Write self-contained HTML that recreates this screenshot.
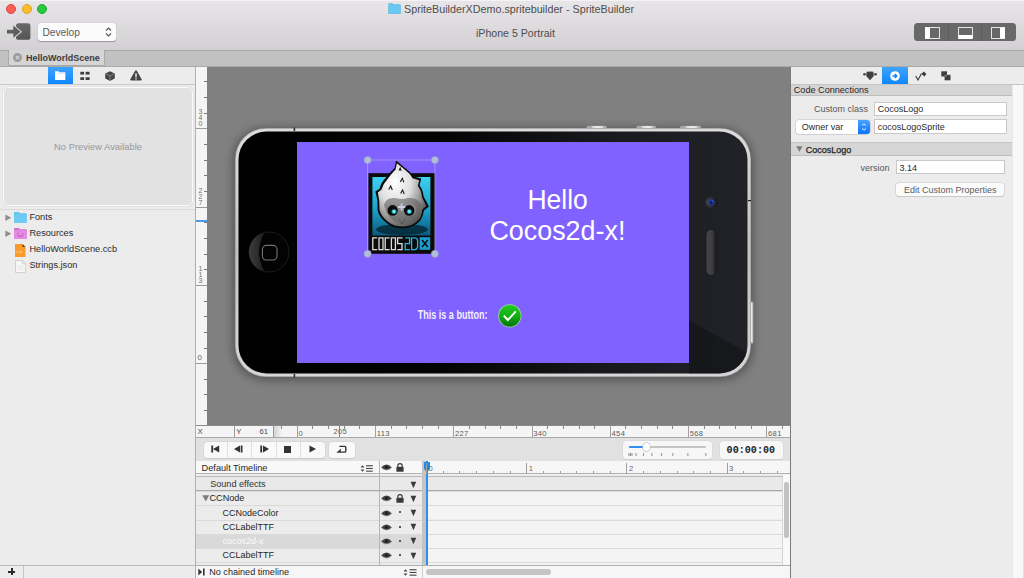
<!DOCTYPE html>
<html><head><meta charset="utf-8">
<style>
*{box-sizing:border-box;margin:0;padding:0}
html,body{width:1024px;height:578px;overflow:hidden;background:#ececec;font-family:"Liberation Sans",sans-serif;color:#333;position:relative}
.a{position:absolute}
.t{position:absolute;white-space:pre;line-height:1}
#title{left:0;top:0;width:1024px;height:51px;background:linear-gradient(#e8e6e8,#d2d0d2);border-bottom:1px solid #a6a6a6}
.tl{position:absolute;top:4px;width:10px;height:10px;border-radius:50%}
#tabbar{left:0;top:51px;width:1024px;height:16px;background:#c1c1c1;border-bottom:1px solid #a9a9a9}
#left{left:0;top:67px;width:195px;height:511px;background:#ececec}
#vrul{left:196px;top:67px;width:11px;height:359px;background:#f5f5f5}
#lborder{left:195px;top:67px;width:1px;height:511px;background:#b0b0b0}
#canvas{left:207px;top:67px;width:584px;height:359px;background:#808080;overflow:hidden}
#right{left:791px;top:67px;width:233px;height:511px;background:#ececec}
#rborder{left:790px;top:67px;width:1px;height:511px;background:#7a7a7a}
#hrul{left:196px;top:426px;width:594px;height:11px;background:#f5f5f5;overflow:hidden}
#hrb{left:196px;top:437px;width:594px;height:1px;background:#a8a8a8}
#hrt{left:196px;top:425px;width:594px;height:1px;background:#8a8a8a}
#tctl{left:196px;top:438px;width:594px;height:23px;background:#e1e1e1}
#tlw{left:196px;top:461px;width:594px;height:117px;background:#ececec;overflow:hidden}
</style></head><body>
<!-- TITLE BAR -->
<div id="title" class="a">
  <div class="a" style="left:0;top:0;width:1024px;height:1px;background:#f3f1f3"></div>
  <div class="tl" style="left:6px;background:#fc5f57;border:0.5px solid #e0443e"></div>
  <div class="tl" style="left:21.5px;background:#fdbc2e;border:0.5px solid #dea123"></div>
  <div class="tl" style="left:37px;background:#28c840;border:0.5px solid #1aab29"></div>
  <svg class="a" style="left:7px;top:23px" width="24" height="18" viewBox="0 0 24 18">
    <defs><linearGradient id="exg" x1="0" y1="0" x2="0" y2="1"><stop offset="0" stop-color="#6a6a6a"/><stop offset="1" stop-color="#545454"/></linearGradient></defs>
    <rect x="9" y="0.2" width="14.4" height="16.6" rx="2.6" fill="url(#exg)"/>
    <path d="M5.8 0.9 L15.2 8.65 L5.8 16.4 Z" fill="#d9d7d9"/>
    <path d="M6.3 2.6 L13.6 8.65 L6.3 14.7 Z" fill="#5e5e5e"/>
    <rect x="0" y="6.8" width="7" height="3.7" fill="#5e5e5e"/>
  </svg>
  <div class="a" style="left:37.5px;top:23px;width:78px;height:18px;background:#fbfbfb;border-radius:3px;box-shadow:0 0.5px 1px rgba(0,0,0,.3)"></div>
  <div class="t" style="left:42.5px;top:27.8px;font-size:10.2px;color:#5a5a5a">Develop</div>
  <svg class="a" style="left:105px;top:26px" width="7" height="12" viewBox="0 0 7 12"><path d="M1 4.5 L3.5 2 L6 4.5 M1 7.5 L3.5 10 L6 7.5" fill="none" stroke="#555" stroke-width="1.1"/></svg>
  <svg class="a" style="left:388px;top:3px" width="13" height="11" viewBox="0 0 13 11"><path d="M0.5 1.2 Q0.5 0.5 1.2 0.5 H4.5 L5.5 1.6 H11.8 Q12.5 1.6 12.5 2.3 V10 Q12.5 10.7 11.8 10.7 H1.2 Q0.5 10.7 0.5 10 Z" fill="#6cc6f2" stroke="#59b1e0" stroke-width="0.6"/></svg>
  <div class="t" style="left:404px;top:3.6px;font-size:10.75px;color:#4d4d4d">SpriteBuilderXDemo.spritebuilder - SpriteBuilder</div>
  <div class="t" style="left:476px;top:28.2px;font-size:10.6px;color:#4d4d4d">iPhone 5 Portrait</div>
  <div class="a" style="left:914px;top:23px;width:102px;height:18px;background:#686868;border-radius:3.5px"></div>
  <div class="a" style="left:948px;top:23px;width:1px;height:18px;background:#5c5c5c"></div>
  <div class="a" style="left:981px;top:23px;width:1px;height:18px;background:#5c5c5c"></div>
  <div class="a" style="left:925px;top:26.5px;width:15px;height:12px;border:1px solid #e6e6e6;border-radius:1px;border-left:5px solid #fff"></div>
  <div class="a" style="left:958px;top:26.5px;width:15px;height:12px;border:1px solid #e6e6e6;border-radius:1px;border-bottom:4px solid #fff"></div>
  <div class="a" style="left:991px;top:26.5px;width:14px;height:12px;border:1px solid #e6e6e6;border-radius:1px;border-right:5px solid #fff"></div>
</div>
<!-- TAB BAR -->
<div id="tabbar" class="a">
  <div class="a" style="left:8.4px;top:-1px;width:96.6px;height:16px;background:#d5d5d5;border:1px solid #a9a9a9;border-top:none;border-radius:0 0 2px 2px"></div>
  <div class="a" style="left:12.5px;top:2px;width:9px;height:9px;border-radius:50%;background:#9d9d9d"></div>
  <svg class="a" style="left:12.5px;top:2px" width="9" height="9" viewBox="0 0 9 9"><path d="M2.8 2.8 L6.2 6.2 M6.2 2.8 L2.8 6.2" stroke="#d6d6d6" stroke-width="1.1"/></svg>
  <div class="t" style="left:26px;top:3px;font-size:9px;font-weight:700;color:#3c3c3c">HelloWorldScene</div>
</div>
<!-- LEFT PANEL -->
<div id="left" class="a">
  <div class="a" style="left:0;top:0;width:195px;height:18px;border-bottom:1px solid #c9c9c9"></div>
  <div class="a" style="left:48px;top:0;width:25px;height:17px;background:linear-gradient(#3ea3ff,#0f87fb)"></div>
  <svg class="a" style="left:55px;top:4px" width="11" height="9" viewBox="0 0 11 9"><path d="M0 0.3 H4 V1.3 H10.3 V9 H0 Z" fill="#fff"/><rect x="0" y="2" width="10.3" height="0.7" fill="#cfe6ff"/></svg>
  <svg class="a" style="left:80px;top:4px" width="10" height="9" viewBox="0 0 10 9"><rect x="0.3" y="0.8" width="3.8" height="2.8" fill="#3f3f3f"/><rect x="5.6" y="0.8" width="4" height="2.8" fill="#3f3f3f"/><rect x="0.3" y="6.2" width="3.8" height="2.9" fill="#3f3f3f"/><rect x="5.6" y="6.2" width="4" height="2.9" fill="#3f3f3f"/></svg>
  <svg class="a" style="left:105px;top:3.5px" width="10" height="10" viewBox="0 0 10 10"><path d="M5 0.2 Q5.4 0.2 9.3 2.2 Q9.8 2.5 9.8 3 V7 Q9.8 7.5 9.3 7.8 L5.4 9.7 Q5 9.9 4.6 9.7 L0.7 7.8 Q0.2 7.5 0.2 7 V3 Q0.2 2.5 0.7 2.2 Q4.6 0.2 5 0.2 Z" fill="#474747"/><path d="M1 2.9 L5 4.9 L9 2.9 M5 4.9 V9.3" stroke="#a8a8a8" stroke-width="0.6" fill="none"/></svg>
  <svg class="a" style="left:129.5px;top:3px" width="12" height="11" viewBox="0 0 12 11"><path d="M6 0.3 Q6.6 0.3 7 1 L11.6 9.3 Q12 10.5 10.8 10.5 H1.2 Q0 10.5 0.4 9.3 L5 1 Q5.4 0.3 6 0.3 Z" fill="#444"/><rect x="5.35" y="3.3" width="1.3" height="4" fill="#fff"/><rect x="5.35" y="8.1" width="1.3" height="1.3" fill="#fff"/></svg>
  <div class="a" style="left:2.5px;top:20px;width:190px;height:118.5px;background:#e2e2e2;border:1.5px solid #fbfbfb;border-radius:5px;box-shadow:0 0 0 0.5px #d9d9d9"></div>
  <div class="t" style="left:0;width:195px;text-align:center;top:74.9px;font-size:9.4px;color:#989898;padding-left:1px">No Preview Available</div>
  <div class="a" style="left:0;top:142px;width:195px;height:1px;background:#d9d9d9"></div>
  <svg class="a" style="left:5px;top:147px" width="7" height="8" viewBox="0 0 7 8"><path d="M0.3 0.6 L6.3 3.8 L0.3 7 Z" fill="#8d8d8d"/></svg>
  <svg class="a" style="left:5px;top:163px" width="7" height="8" viewBox="0 0 7 8"><path d="M0.3 0.6 L6.3 3.8 L0.3 7 Z" fill="#8d8d8d"/></svg>
  <svg class="a" style="left:14px;top:145px" width="13" height="11" viewBox="0 0 13 11"><path d="M0 1 Q0 0 1 0 H5 L5.8 1.2 H12 Q12.7 1.2 12.7 2 V10.3 Q12.7 11 12 11 H0.7 Q0 11 0 10.3 Z" fill="#62c2f0"/><rect x="0" y="2.2" width="12.7" height="8.8" rx="0.7" fill="#6ccaf4"/></svg>
  <svg class="a" style="left:14px;top:161px" width="13" height="11" viewBox="0 0 13 11"><path d="M0 1 Q0 0 1 0 H5 L5.8 1.2 H12 Q12.7 1.2 12.7 2 V10.3 Q12.7 11 12 11 H0.7 Q0 11 0 10.3 Z" fill="#d56fd2"/><rect x="0" y="2.2" width="12.7" height="8.8" rx="0.7" fill="#e58ae0"/><path d="M3.8 5.2 v0.8 M8.9 5.2 v0.8 M3.3 7.3 Q6.35 9.6 9.4 7.3" stroke="#a33ea0" stroke-width="0.7" fill="none"/></svg>
  <svg class="a" style="left:15px;top:176.5px" width="11" height="13" viewBox="0 0 11 13"><path d="M0 0 H7.5 L10.5 3 V13 H0 Z" fill="#fb9a2c"/><path d="M7.5 0 V3 H10.5 Z" fill="#3d2a10" opacity=".8"/><text x="0.6" y="8.6" font-size="4.3" font-family="Liberation Sans" fill="#ffd9a8">ccb</text></svg>
  <svg class="a" style="left:15px;top:192.5px" width="11" height="13" viewBox="0 0 11 13"><path d="M0.5 0.5 H7.3 L10.5 3.7 V12.5 H0.5 Z" fill="#f7f7f7" stroke="#c8c8c8" stroke-width="0.8"/><path d="M7.3 0.5 V3.7 H10.5" fill="none" stroke="#c8c8c8" stroke-width="0.8"/><path d="M2 6 H8.5 M2 7.7 H8.5 M2 9.4 H8.5" stroke="#dedede" stroke-width="0.6"/></svg>
  <div class="t" style="left:29.4px;top:145.5px;font-size:9.2px;color:#2b2b2b">Fonts</div>
  <div class="t" style="left:29.4px;top:161.5px;font-size:9.2px;color:#2b2b2b">Resources</div>
  <div class="t" style="left:29.4px;top:177.5px;font-size:9.2px;color:#2b2b2b">HelloWorldScene.ccb</div>
  <div class="t" style="left:29.4px;top:193.5px;font-size:9.2px;color:#2b2b2b">Strings.json</div>
  <div class="a" style="left:0;top:498px;width:195px;height:13px;border-top:1px solid #bdbdbd;background:#ececec"></div>
  <div class="a" style="left:23px;top:499px;width:1px;height:12px;background:#c4c4c4"></div>
  <div class="a" style="left:8.2px;top:503.6px;width:7px;height:2px;background:#2a2a2a"></div>
  <div class="a" style="left:10.7px;top:501.1px;width:2px;height:7px;background:#2a2a2a"></div>
</div>
<!-- VERTICAL RULER -->
<div id="lborder" class="a"></div>
<div id="vrul" class="a"><div class="a" style="left:8px;top:14.2px;width:3px;height:1px;background:#7a7a7a"></div><div class="a" style="left:8px;top:29.9px;width:3px;height:1px;background:#7a7a7a"></div><div class="a" style="left:8px;top:45.5px;width:3px;height:1px;background:#7a7a7a"></div><div class="a" style="left:0;top:61.2px;width:11px;height:1px;background:#9a9a9a"></div><div class="a" style="left:8px;top:76.8px;width:3px;height:1px;background:#7a7a7a"></div><div class="a" style="left:8px;top:92.5px;width:3px;height:1px;background:#7a7a7a"></div><div class="a" style="left:8px;top:108.2px;width:3px;height:1px;background:#7a7a7a"></div><div class="a" style="left:8px;top:123.8px;width:3px;height:1px;background:#7a7a7a"></div><div class="a" style="left:0;top:139.5px;width:11px;height:1px;background:#9a9a9a"></div><div class="a" style="left:8px;top:155.2px;width:3px;height:1px;background:#7a7a7a"></div><div class="a" style="left:8px;top:170.8px;width:3px;height:1px;background:#7a7a7a"></div><div class="a" style="left:8px;top:186.5px;width:3px;height:1px;background:#7a7a7a"></div><div class="a" style="left:8px;top:202.1px;width:3px;height:1px;background:#7a7a7a"></div><div class="a" style="left:0;top:217.8px;width:11px;height:1px;background:#9a9a9a"></div><div class="a" style="left:8px;top:233.5px;width:3px;height:1px;background:#7a7a7a"></div><div class="a" style="left:8px;top:249.1px;width:3px;height:1px;background:#7a7a7a"></div><div class="a" style="left:8px;top:264.8px;width:3px;height:1px;background:#7a7a7a"></div><div class="a" style="left:8px;top:280.5px;width:3px;height:1px;background:#7a7a7a"></div><div class="a" style="left:0;top:296.1px;width:11px;height:1px;background:#9a9a9a"></div><div class="a" style="left:8px;top:311.8px;width:3px;height:1px;background:#7a7a7a"></div><div class="a" style="left:8px;top:327.4px;width:3px;height:1px;background:#7a7a7a"></div><div class="a" style="left:8px;top:343.1px;width:3px;height:1px;background:#7a7a7a"></div><div class="t" style="left:1px;top:42.1px;width:7px;font-size:7px;line-height:6px;color:#707070;text-align:center;white-space:normal">3<br>4<br>0</div><div class="t" style="left:1px;top:120.5px;width:7px;font-size:7px;line-height:6px;color:#707070;text-align:center;white-space:normal">2<br>2<br>7</div><div class="t" style="left:1px;top:198.9px;width:7px;font-size:7px;line-height:6px;color:#707070;text-align:center;white-space:normal">1<br>1<br>3</div><div class="t" style="left:1.5px;top:287.3px;font-size:8px;color:#666">0</div><div class="a" style="left:0;top:152.8px;width:11px;height:2px;background:#4a9ae6"></div></div>
<!-- CANVAS -->
<div id="canvas" class="a">
<svg class="a" style="left:0;top:0" width="584" height="359" viewBox="207 67 584 359">
 <defs>
  <radialGradient id="shad" cx="0.5" cy="0.5" r="0.5"><stop offset="0.8" stop-color="#000" stop-opacity="0.25"/><stop offset="1" stop-color="#000" stop-opacity="0"/></radialGradient>
  <linearGradient id="bez" x1="0" y1="0" x2="0" y2="1"><stop offset="0" stop-color="#dcdcdc"/><stop offset="0.5" stop-color="#c4c4c4"/><stop offset="1" stop-color="#d6d6d6"/></linearGradient>
  <linearGradient id="body" x1="0" y1="0" x2="1" y2="0"><stop offset="0" stop-color="#000"/><stop offset="0.4" stop-color="#040405"/><stop offset="0.72" stop-color="#18191c"/><stop offset="0.9" stop-color="#1f2025"/><stop offset="1" stop-color="#202227"/></linearGradient>
  <linearGradient id="refl" x1="0" y1="0" x2="1" y2="1"><stop offset="0" stop-color="#2a2b30" stop-opacity="0"/><stop offset="0.5" stop-color="#2a2b30" stop-opacity="0.0"/><stop offset="0.52" stop-color="#000" stop-opacity="0.35"/><stop offset="1" stop-color="#000" stop-opacity="0.45"/></linearGradient>
  <linearGradient id="home" x1="0" y1="0" x2="1" y2="0"><stop offset="0" stop-color="#3c3c3c"/><stop offset="0.5" stop-color="#2e2e2e"/><stop offset="1" stop-color="#1a1a1a"/></linearGradient>
  <linearGradient id="logoBg" x1="0" y1="0" x2="0" y2="1"><stop offset="0" stop-color="#3fd0f0"/><stop offset="0.55" stop-color="#1ba2cc"/><stop offset="1" stop-color="#0b5a7c"/></linearGradient>
  <radialGradient id="head" cx="0.35" cy="0.3" r="0.75"><stop offset="0" stop-color="#ffffff"/><stop offset="0.45" stop-color="#dedede"/><stop offset="0.8" stop-color="#8c8c8c"/><stop offset="1" stop-color="#555"/></radialGradient>
  <linearGradient id="btn" x1="0" y1="0" x2="0" y2="1"><stop offset="0" stop-color="#22cc22"/><stop offset="0.55" stop-color="#0fae12"/><stop offset="1" stop-color="#06700a"/></linearGradient>
 </defs>
 <filter id="blur" x="-20%" y="-20%" width="140%" height="140%"><feGaussianBlur stdDeviation="5"/></filter>
 <rect x="233" y="128" width="520" height="252" rx="32" fill="#000" opacity="0.35" filter="url(#blur)"/>
 <rect x="586.4" y="125.8" width="20.6" height="4" rx="2" fill="#a8a8a8"/>
 <ellipse cx="597.7" cy="127" rx="6.2" ry="1" fill="#e8e8e8"/>
 <rect x="636.3" y="125.8" width="20" height="4" rx="2" fill="#a8a8a8"/>
 <ellipse cx="647.3" cy="127" rx="6.0" ry="1" fill="#e8e8e8"/>
 <rect x="680" y="125.8" width="21.3" height="4" rx="2" fill="#a8a8a8"/>
 <ellipse cx="691.7" cy="127" rx="6.4" ry="1" fill="#e8e8e8"/>
 <rect x="749" y="301.5" width="4.3" height="42" rx="1.6" fill="#bdbdbd"/>
 <rect x="750.6" y="303" width="1.6" height="39" rx="0.8" fill="#ececec"/>
 <rect x="235" y="128" width="516" height="249" rx="31" fill="#9c9c9c"/>
 <rect x="235.7" y="128.7" width="514.6" height="247.6" rx="30.3" fill="url(#bez)"/>
 <rect x="238.5" y="131.5" width="509" height="242" rx="28" fill="url(#body)"/>
 <clipPath id="bodyclip"><rect x="238.5" y="131.5" width="509" height="242" rx="28"/></clipPath>
 <path d="M689 320.6 L748 353.3 L748 374 L689 374 Z" fill="#0c0d0f" opacity="0.45" clip-path="url(#bodyclip)"/>
 <rect x="297" y="142" width="392" height="221" fill="#7f62ff"/>
 <circle cx="269" cy="252" r="20" fill="#030303" stroke="#1c1c1c" stroke-width="1"/>
 <path d="M 264.6 232.5 A 20 20 0 0 0 264.6 271.5 Q 253.5 252 264.6 232.5 Z" fill="url(#home)"/>
 <rect x="262.4" y="245.4" width="14.6" height="14.6" rx="4" fill="none" stroke="#747474" stroke-width="1.1"/>
 <radialGradient id="camg" cx="0.3" cy="0.5" r="0.75"><stop offset="0" stop-color="#4a4a4e"/><stop offset="0.6" stop-color="#2a2a2e"/><stop offset="1" stop-color="#0e0e10"/></radialGradient>
 <circle cx="711.4" cy="202.3" r="6" fill="url(#camg)"/>
 <circle cx="711.6" cy="202.3" r="3" fill="#1a36a8"/>
 <circle cx="711.4" cy="202.5" r="1.3" fill="#0a1030"/>
 <circle cx="712.4" cy="201.4" r="0.8" fill="#3a5ce0"/>
 <pattern id="mesh" x="0" y="0" width="1.6" height="1.6" patternUnits="userSpaceOnUse"><rect width="1.6" height="1.6" fill="#3a3a3c"/><rect width="0.8" height="0.8" fill="#505052"/><rect x="0.8" y="0.8" width="0.8" height="0.8" fill="#505052"/></pattern>
 <linearGradient id="spkg" x1="0" y1="0" x2="1" y2="0"><stop offset="0" stop-color="#000" stop-opacity="0"/><stop offset="0.6" stop-color="#000" stop-opacity="0.1"/><stop offset="1" stop-color="#000" stop-opacity="0.65"/></linearGradient>
 <rect x="705.8" y="229" width="10.6" height="46.8" rx="5.3" fill="#151517"/>
 <rect x="706.4" y="229.8" width="9.6" height="45.4" rx="4.8" fill="url(#mesh)"/>
 <rect x="706.4" y="229.8" width="9.6" height="45.4" rx="4.8" fill="url(#spkg)"/>
 <rect x="293.6" y="127.5" width="1.6" height="3.5" fill="#333"/>
 <rect x="293.6" y="374" width="1.6" height="3.5" fill="#333"/>
 <rect x="748" y="200" width="3" height="1.2" fill="#222"/>
 <text x="527.4" y="209" font-family="Liberation Sans" font-size="26.8" fill="#fff" textLength="60.4" lengthAdjust="spacingAndGlyphs">Hello</text>
 <text x="489.4" y="240.2" font-family="Liberation Sans" font-size="26.8" fill="#fff" textLength="136" lengthAdjust="spacingAndGlyphs">Cocos2d-x!</text>
 <text x="0" y="0" font-family="Liberation Sans" font-weight="bold" font-size="12" fill="#f4f0ff" transform="translate(417.8 319.4) scale(0.752 1)">This is a button:</text>
 <circle cx="509.8" cy="315.8" r="11.6" fill="#9fd49f"/>
 <circle cx="509.8" cy="315.8" r="10.8" fill="url(#btn)"/>
 <path d="M503.8 315.6 L507.8 320 L515.8 311.4" fill="none" stroke="#fff" stroke-width="1.9" stroke-linecap="butt" stroke-linejoin="miter"/>
 <!-- logo -->
 <rect x="368.4" y="173.2" width="66.6" height="80.6" fill="#0b0b0b"/>
 <rect x="372.4" y="177" width="58" height="58.5" fill="url(#logoBg)"/>
 <ellipse cx="402" cy="229.5" rx="26" ry="5.5" fill="#04202e" opacity="0.75"/>
 <path d="M396.1 160.6 L405.6 168.4 Q411 172 413.6 176.6 L421.2 178.6 L419.6 185.6 Q423 190 423.6 196.5 L429 206.6 L424 210.6 Q423 217 420.3 220.5 Q413 228.3 403.7 228.3 Q393 228.3 387.1 223.4 Q379 217.5 377.6 210.3 L377.4 200 L375.4 191.4 L379.6 188.8 Q381.3 182 385.6 178 Q390 172 394.6 168 Z" fill="#0a0a0a"/>
 <path d="M396.9 163.2 L404.9 169.8 Q410 173.5 412.6 178.2 L419.3 180.2 L417.8 186 Q421.6 190.5 421.9 197 L426.4 206.1 L422.4 209.6 Q421.6 216.6 419 219.6 Q412.5 226.6 403.7 226.6 Q393.8 226.6 388.2 222 Q381 216.5 379.5 209.8 L379.2 200.4 L377.8 192.4 L381.4 189.8 Q383.2 183.4 387.2 179.4 Q391.4 173.6 395.6 169.4 Z" fill="url(#head)"/>
 <path d="M384 205 Q386 197 395 198 Q402 200 408 198 Q418 197 421 205 Q420 220 404 225 Q388 222 384 205 Z" fill="#606060" opacity="0.6"/>
 <path d="M399 170.4 l1.2 -2.2 l0.9 2.6 M400.3 182 l2 -3.6 l1.6 4 M388.7 189.6 l2 -3.6 l1.6 4 M400.6 193.6 l2 -3.6 l1.6 4" stroke="#1a1a1a" stroke-width="1.1" fill="none" stroke-linejoin="miter"/>
 <ellipse cx="392.4" cy="209.8" rx="6.6" ry="6.3" fill="#8a8a8a"/>
 <ellipse cx="409.4" cy="209.8" rx="6.6" ry="6.3" fill="#8a8a8a"/>
 <ellipse cx="392.6" cy="210.4" rx="5.2" ry="5.3" fill="#0b0b0b"/>
 <ellipse cx="409.2" cy="210.4" rx="5.2" ry="5.3" fill="#0b0b0b"/>
 <circle cx="394" cy="211.5" r="2.6" fill="#1fb8c8" opacity="0.6"/>
 <circle cx="409.3" cy="211.5" r="2.6" fill="#1fb8c8" opacity="0.6"/>
 <circle cx="394" cy="211.5" r="1.7" fill="#5ff8ff"/>
 <circle cx="409.3" cy="211.5" r="1.7" fill="#5ff8ff"/>
 <path d="M399 219 L402 224 L405 219" stroke="#3a3a3a" stroke-width="0.8" fill="none" opacity="0.6"/>
 <g fill="none" stroke="#e0e0e0" stroke-width="1.3">
  <path d="M377.2 237.8 H372.8 V249.6 H377.2 M379 237.8 H383 V249.6 H379 Z M389.6 237.8 H385.2 V249.6 H389.6 M391.4 237.8 H395.4 V249.6 H391.4 Z M402.6 237.8 H397.6 V243.7 H402 V249.6 H397.4"/>
 </g>
 <g fill="none" stroke="#27b3e0" stroke-width="1.3">
  <path d="M405.2 237.8 H409.6 V243.7 H405.2 V249.6 H409.8 M411.6 237.8 H414.6 Q417.6 237.8 417.6 240.8 V246.6 Q417.6 249.6 414.6 249.6 H411.6 Z"/>
 </g>
 <rect x="419.6" y="237.2" width="10.6" height="12.6" fill="#1a9ccc"/>
 <path d="M422 240 L427.8 247 M427.8 240 L422 247" stroke="#0d0d0d" stroke-width="1.5"/>
 <!-- selection -->
 <path d="M367.6 160 H434.9 M367.6 160 V253.8 M434.9 160 V253.8" stroke="#b9b4f0" stroke-width="0.8" fill="none" opacity="0.8"/>
 <path d="M398 207 H405.2 M401.6 203.4 V210.6" stroke="#c8d0e8" stroke-width="1.8"/>
 <circle cx="367.6" cy="160" r="3.6" fill="#b3bcd8" stroke="#8f98b8" stroke-width="0.6"/>
 <circle cx="434.9" cy="160" r="3.6" fill="#b3bcd8" stroke="#8f98b8" stroke-width="0.6"/>
 <circle cx="367.6" cy="253.8" r="3.6" fill="#b3bcd8" stroke="#8f98b8" stroke-width="0.6"/>
 <circle cx="434.9" cy="253.8" r="3.6" fill="#b3bcd8" stroke="#8f98b8" stroke-width="0.6"/>
</svg>
</div>
<!-- RIGHT PANEL -->
<div id="rborder" class="a"></div>
<div id="right" class="a">
  <div class="a" style="left:0;top:0;width:233px;height:18px;background:#ececec;border-bottom:1px solid #c4c4c4"></div>
  <div class="a" style="left:91px;top:0;width:25.5px;height:17px;background:linear-gradient(#3ea3ff,#0f87fb)"></div>
  <svg class="a" style="left:72px;top:3.5px" width="14" height="10" viewBox="0 0 14 10"><path d="M3.6 0.8 Q7 0.2 10.4 0.8 L10.8 5 L7 9.2 L3.2 5 Z" fill="#404040"/><circle cx="1.5" cy="3.2" r="1.3" fill="#404040"/><circle cx="12.5" cy="3.2" r="1.3" fill="#404040"/></svg>
  <svg class="a" style="left:98.5px;top:3.5px" width="10" height="10" viewBox="0 0 10 10"><circle cx="5" cy="5" r="4.8" fill="#fff"/><path d="M2.4 5 H6.6 M4.8 3 L6.9 5 L4.8 7" stroke="#0f87fb" stroke-width="1.5" fill="none" stroke-linejoin="round"/></svg>
  <svg class="a" style="left:124px;top:3.5px" width="12" height="10" viewBox="0 0 12 10"><path d="M0.7 5 L3 9 L6.5 2.5" stroke="#3a3a3a" stroke-width="1.1" fill="none"/><path d="M6.5 3 L8.8 0.6 L11.4 3 L9.3 5.4 Z" fill="#3a3a3a"/></svg>
  <svg class="a" style="left:149.5px;top:3.5px" width="10" height="10" viewBox="0 0 10 10"><rect x="0.3" y="0.3" width="5.7" height="5.2" fill="#3e3e3e"/><rect x="3.6" y="3.8" width="5.9" height="5.5" fill="#3e3e3e"/><path d="M3.6 3.8 H6 V5.5 H3.6 Z" fill="#ececec" opacity="0.35"/></svg>
  <div class="a" style="left:0;top:18px;width:221px;height:11px;background:#d5d5d5;border-bottom:1px solid #bdbdbd"></div>
  <div class="t" style="left:2.8px;top:18.9px;font-size:9.1px;color:#262626">Code Connections</div>
  <div class="t" style="left:23px;top:38px;font-size:9px;color:#575757">Custom class</div>
  <div class="a" style="left:83.4px;top:34.7px;width:132.6px;height:14px;background:#fff;border:1px solid #c9c9c9"></div>
  <div class="t" style="left:86.7px;top:37.5px;font-size:9px;color:#2a2a2a">CocosLogo</div>
  <div class="a" style="left:5.2px;top:53px;width:74px;height:14px;background:#fff;border-radius:3px;box-shadow:0 0 0 0.6px #c4c4c4,0 0.6px 0.6px rgba(0,0,0,.15)"></div>
  <div class="a" style="left:67px;top:53px;width:12.2px;height:14px;background:linear-gradient(#4aa2ff,#0a74fa);border-radius:0 3px 3px 0"></div>
  <svg class="a" style="left:70px;top:55px" width="6" height="10" viewBox="0 0 6 10"><path d="M1 3.6 L3 1.8 L5 3.6 M1 6.4 L3 8.2 L5 6.4" stroke="#fff" stroke-width="0.9" fill="none"/></svg>
  <div class="t" style="left:10.8px;top:56.3px;font-size:9px;color:#2a2a2a">Owner var</div>
  <div class="a" style="left:83.4px;top:52.2px;width:132.6px;height:14.5px;background:#fff;border:1px solid #c9c9c9"></div>
  <div class="t" style="left:86.7px;top:55.8px;font-size:9px;color:#2a2a2a">cocosLogoSprite</div>
  <div class="a" style="left:0;top:75px;width:221px;height:14px;background:#d5d5d5;border-top:1px solid #c4c4c4;border-bottom:1px solid #bdbdbd"></div>
  <svg class="a" style="left:5.2px;top:79px" width="7" height="6" viewBox="0 0 7 6"><path d="M0.2 0.3 H6.6 L3.4 5.8 Z" fill="#7d7d7d"/></svg>
  <div class="t" style="left:14.7px;top:78.6px;font-size:9px;color:#262626;-webkit-text-stroke:0.25px #262626">CocosLogo</div>
  <div class="t" style="left:69.5px;top:96.6px;font-size:9px;color:#575757">version</div>
  <div class="a" style="left:105px;top:92.9px;width:108.8px;height:14.5px;background:#fff;border:1px solid #c9c9c9"></div>
  <div class="t" style="left:108.5px;top:96.5px;font-size:9px;color:#2a2a2a">3.14</div>
  <div class="a" style="left:105.3px;top:115.6px;width:108px;height:13.4px;background:#fbfbfb;border-radius:3px;box-shadow:0 0 0 0.6px #c8c8c8,0 0.7px 0.7px rgba(0,0,0,.15)"></div>
  <div class="t" style="left:105.3px;width:108px;text-align:center;top:118.5px;font-size:9px;color:#5c5c5c">Edit Custom Properties</div>
  <div class="a" style="left:221px;top:18px;width:12px;height:493px;background:#f8f8f8;border-left:1px solid #e8e8e8;border-right:1px solid #e2e2e2"></div>
</div>
<!-- H RULER -->
<div id="hrt" class="a"></div><div id="hrb" class="a"></div>
<div id="hrul" class="a"><div class="a" style="left:38px;top:0;width:1px;height:11px;background:#9a9a9a"></div><div class="a" style="left:77px;top:0;width:1px;height:11px;background:#9a9a9a"></div><div class="a" style="left:78px;top:0;width:8px;height:11px;background:linear-gradient(90deg,#d4d4d4,#f5f5f5)"></div><div class="t" style="left:1.4px;top:1.6px;font-size:7.8px;color:#4a4a4a">X</div><div class="t" style="left:40.3px;top:1.6px;font-size:7.8px;color:#4a4a4a">Y</div><div class="t" style="left:63.4px;top:1.6px;font-size:7.8px;color:#4a4a4a">61</div><div class="a" style="left:85.0px;top:0;width:1px;height:3px;background:#8a8a8a"></div><div class="a" style="left:100.7px;top:0;width:1px;height:11px;background:#a0a0a0"></div><div class="t" style="left:102.5px;top:4px;font-size:7.6px;color:#5c5c5c;letter-spacing:0.3px">0</div><div class="a" style="left:116.4px;top:0;width:1px;height:3px;background:#8a8a8a"></div><div class="a" style="left:132.0px;top:0;width:1px;height:3px;background:#8a8a8a"></div><div class="a" style="left:147.7px;top:0;width:1px;height:3px;background:#8a8a8a"></div><div class="a" style="left:163.3px;top:0;width:1px;height:3px;background:#8a8a8a"></div><div class="a" style="left:179.0px;top:0;width:1px;height:11px;background:#a0a0a0"></div><div class="t" style="left:180.8px;top:4px;font-size:7.6px;color:#5c5c5c;letter-spacing:0.3px">113</div><div class="a" style="left:194.6px;top:0;width:1px;height:3px;background:#8a8a8a"></div><div class="a" style="left:210.3px;top:0;width:1px;height:3px;background:#8a8a8a"></div><div class="a" style="left:225.9px;top:0;width:1px;height:3px;background:#8a8a8a"></div><div class="a" style="left:241.6px;top:0;width:1px;height:3px;background:#8a8a8a"></div><div class="a" style="left:257.2px;top:0;width:1px;height:11px;background:#a0a0a0"></div><div class="t" style="left:259.0px;top:4px;font-size:7.6px;color:#5c5c5c;letter-spacing:0.3px">227</div><div class="a" style="left:272.9px;top:0;width:1px;height:3px;background:#8a8a8a"></div><div class="a" style="left:288.5px;top:0;width:1px;height:3px;background:#8a8a8a"></div><div class="a" style="left:304.2px;top:0;width:1px;height:3px;background:#8a8a8a"></div><div class="a" style="left:319.9px;top:0;width:1px;height:3px;background:#8a8a8a"></div><div class="a" style="left:335.5px;top:0;width:1px;height:11px;background:#a0a0a0"></div><div class="t" style="left:337.3px;top:4px;font-size:7.6px;color:#5c5c5c;letter-spacing:0.3px">340</div><div class="a" style="left:351.2px;top:0;width:1px;height:3px;background:#8a8a8a"></div><div class="a" style="left:366.8px;top:0;width:1px;height:3px;background:#8a8a8a"></div><div class="a" style="left:382.5px;top:0;width:1px;height:3px;background:#8a8a8a"></div><div class="a" style="left:398.1px;top:0;width:1px;height:3px;background:#8a8a8a"></div><div class="a" style="left:413.8px;top:0;width:1px;height:11px;background:#a0a0a0"></div><div class="t" style="left:415.6px;top:4px;font-size:7.6px;color:#5c5c5c;letter-spacing:0.3px">454</div><div class="a" style="left:429.4px;top:0;width:1px;height:3px;background:#8a8a8a"></div><div class="a" style="left:445.1px;top:0;width:1px;height:3px;background:#8a8a8a"></div><div class="a" style="left:460.7px;top:0;width:1px;height:3px;background:#8a8a8a"></div><div class="a" style="left:476.4px;top:0;width:1px;height:3px;background:#8a8a8a"></div><div class="a" style="left:492.0px;top:0;width:1px;height:11px;background:#a0a0a0"></div><div class="t" style="left:493.8px;top:4px;font-size:7.6px;color:#5c5c5c;letter-spacing:0.3px">568</div><div class="a" style="left:507.7px;top:0;width:1px;height:3px;background:#8a8a8a"></div><div class="a" style="left:523.4px;top:0;width:1px;height:3px;background:#8a8a8a"></div><div class="a" style="left:539.0px;top:0;width:1px;height:3px;background:#8a8a8a"></div><div class="a" style="left:554.7px;top:0;width:1px;height:3px;background:#8a8a8a"></div><div class="a" style="left:570.3px;top:0;width:1px;height:11px;background:#a0a0a0"></div><div class="t" style="left:572.1px;top:4px;font-size:7.6px;color:#5c5c5c;letter-spacing:0.3px">681</div><div class="a" style="left:586.0px;top:0;width:1px;height:3px;background:#8a8a8a"></div><div class="t" style="left:137.5px;top:2.2px;font-size:7.6px;color:#5c5c5c;letter-spacing:0.3px">205</div><div class="a" style="left:142.6px;top:0;width:1.2px;height:11px;background:#3d8fe0"></div></div>
<!-- TIMELINE CONTROLS -->
<div id="tctl" class="a">
  <div class="a" style="left:7.5px;top:3.8px;width:121px;height:15.8px;background:#f9f9f9;border-radius:3.5px;box-shadow:0 0 0 0.5px #d0d0d0,0 0.8px 0.8px rgba(0,0,0,.12)"></div>
  <div class="a" style="left:31.2px;top:3.8px;width:1px;height:15.8px;background:#e0e0e0"></div>
  <div class="a" style="left:55.2px;top:3.8px;width:1px;height:15.8px;background:#e0e0e0"></div>
  <div class="a" style="left:79.5px;top:3.8px;width:1px;height:15.8px;background:#e0e0e0"></div>
  <div class="a" style="left:103.7px;top:3.8px;width:1px;height:15.8px;background:#e0e0e0"></div>
  <svg class="a" style="left:14.7px;top:7.4px" width="9" height="8" viewBox="0 0 9 8"><rect x="0.3" y="0.5" width="1.8" height="7" fill="#333"/><path d="M8.2 0.5 V7.5 L2 4 Z" fill="#333"/></svg>
  <svg class="a" style="left:38.2px;top:7.4px" width="9" height="8" viewBox="0 0 9 8"><rect x="6.7" y="0.5" width="1.8" height="7" fill="#333"/><path d="M6 0.5 V7.5 L0 4 Z" fill="#333"/></svg>
  <svg class="a" style="left:63.6px;top:7.4px" width="9" height="8" viewBox="0 0 9 8"><rect x="0.3" y="0.5" width="1.8" height="7" fill="#333"/><path d="M3 0.5 V7.5 L9 4 Z" fill="#333"/></svg>
  <div class="a" style="left:87.9px;top:7.8px;width:7.2px;height:7px;background:#333"></div>
  <svg class="a" style="left:113.4px;top:7.4px" width="8" height="8" viewBox="0 0 8 8"><path d="M0.5 0.5 V7.5 L7 4 Z" fill="#333"/></svg>
  <div class="a" style="left:132.8px;top:3.8px;width:26.5px;height:15.8px;background:#f9f9f9;border-radius:3.5px;box-shadow:0 0 0 0.5px #d0d0d0,0 0.8px 0.8px rgba(0,0,0,.12)"></div>
  <svg class="a" style="left:140px;top:7px" width="12" height="9" viewBox="0 0 12 9"><path d="M3.4 1.4 H8.6 Q9.8 1.4 9.8 2.6 V5.9 Q9.8 7.1 8.6 7.1 H4.4" fill="none" stroke="#333" stroke-width="1.4"/><path d="M0.3 7.8 L4.8 3.8 V7.8 Z" fill="#333"/></svg>
  <div class="a" style="left:426.8px;top:3px;width:89.3px;height:17.5px;background:#f7f7f7;border-radius:3.5px;box-shadow:0 0 0 0.5px #d6d6d6,0 0.8px 0.8px rgba(0,0,0,.1)"></div>
  <div class="a" style="left:433.1px;top:8px;width:77.3px;height:2px;background:#c4c4c4;border-radius:1px"></div>
  <div class="a" style="left:433.1px;top:8px;width:17px;height:2px;background:#2f8ef5;border-radius:1px"></div>
  <div class="a" style="left:446.9px;top:5.2px;width:7.6px;height:7.6px;background:#fff;border-radius:50%;box-shadow:0 0 0 0.5px #bdbdbd,0 0.5px 1px rgba(0,0,0,.3)"></div>
  <svg class="a" style="left:432.1px;top:14.5px" width="80" height="3" viewBox="0 0 80 3"><g fill="#777"><rect x="0.6" width="0.8" height="3"/><rect x="2.1" width="0.8" height="3"/><rect x="3.6" width="0.8" height="3"/><rect x="7.6" width="0.8" height="3"/><rect x="15" width="0.8" height="3"/><rect x="23.5" width="0.8" height="3"/><rect x="33" width="0.8" height="3"/><rect x="44.5" width="0.8" height="3"/><rect x="59.5" width="0.8" height="3"/><rect x="77.5" width="0.8" height="3"/></g></svg>
  <div class="a" style="left:523.8px;top:3px;width:63.3px;height:17.5px;background:#f7f7f7;border-radius:3.5px;box-shadow:0 0 0 0.5px #d6d6d6,0 0.8px 0.8px rgba(0,0,0,.1)"></div>
  <div class="t" style="left:530.6px;top:8px;font-family:'Liberation Mono',monospace;font-weight:700;font-size:10.1px;color:#222">00:00:00</div>
</div>
<!-- TIMELINE -->
<div id="tlw" class="a"><div class="a" style="left:0;top:0;width:594px;height:0.8px;background:#c6c6c6"></div><div class="a" style="left:0;top:0;width:183px;height:12.5px;background:#f8f8f8"></div><div class="a" style="left:184px;top:0;width:42px;height:12.5px;background:#f8f8f8"></div><div class="a" style="left:230px;top:0;width:364px;height:12.5px;background:#f6f6f6"></div><div class="a" style="left:0;top:12.3px;width:594px;height:1px;background:#b3b3b3"></div><div class="a" style="left:0;top:13.3px;width:594px;height:2px;background:#ededed"></div><div class="a" style="left:0;top:15.3px;width:594px;height:1px;background:#b8b8b8"></div><div class="t" style="left:5.6px;top:2.7px;font-size:9.2px;color:#262626">Default Timeline</div><svg class="a" style="left:164.2px;top:2.5px" width="13" height="9" viewBox="0 0 13 9"><path d="M0.5 3.6 L2.5 1.2 L4.5 3.6 Z M0.5 5.4 L2.5 7.8 L4.5 5.4 Z" fill="#444"/><rect x="6" y="1.2" width="6.8" height="1.1" fill="#444"/><rect x="6" y="3.9" width="6.8" height="1.1" fill="#444"/><rect x="6" y="6.6" width="6.8" height="1.1" fill="#444"/></svg><svg class="a" style="left:185.3px;top:2.5px" width="11" height="7" viewBox="0 0 11 7"><path d="M0.2 3.6 Q5.5 -2.4 10.8 3.6 Q5.5 8.6 0.2 3.6 Z" fill="#404040"/><path d="M1.6 4.4 Q5.5 7.6 9.4 4.4" stroke="#9a9a9a" stroke-width="0.7" fill="none"/><circle cx="5.5" cy="3.3" r="1.5" fill="#1e1e1e"/></svg><svg class="a" style="left:200.2px;top:1.8px" width="8" height="9" viewBox="0 0 8 9"><path d="M1.8 4 V2.8 Q1.8 0.6 4 0.6 Q6.2 0.6 6.2 2.8 V4" fill="none" stroke="#3a3a3a" stroke-width="1.1"/><rect x="0.4" y="3.8" width="7.2" height="5" rx="0.6" fill="#3a3a3a"/></svg><div class="a" style="left:0;top:16.3px;width:585.5px;height:13.7px;background:#e9e9e9"></div><div class="a" style="left:0;top:29.3px;width:585.5px;height:1.3px;background:#a9a9a9"></div><div class="t" style="left:14.2px;top:19px;font-size:9.1px;color:#333">Sound effects</div><svg class="a" style="left:213.8px;top:19.5px" width="7" height="8" viewBox="0 0 7 8"><path d="M0.6 0.8 H6.2 L3.4 7.2 Z" fill="#3a3a3a"/></svg><div class="a" style="left:0;top:30.80px;width:226px;height:13.30px;background:#ececec"></div><div class="a" style="left:230px;top:30.80px;width:355.5px;height:13.30px;background:#f4f4f4"></div><div class="a" style="left:0;top:30.00px;width:585.5px;height:0.8px;background:#dadada"></div><svg class="a" style="left:5.8px;top:34px" width="8" height="7" viewBox="0 0 8 7"><path d="M0.3 0.3 H7.2 L3.75 6.6 Z" fill="#7d7d7d"/></svg><div class="t" style="left:13.5px;top:33.30px;font-size:9.1px;color:#262626">CCNode</div><svg class="a" style="left:185.3px;top:34.2px" width="11" height="7" viewBox="0 0 11 7"><path d="M0.2 3.6 Q5.5 -2.4 10.8 3.6 Q5.5 8.6 0.2 3.6 Z" fill="#404040"/><path d="M1.6 4.4 Q5.5 7.6 9.4 4.4" stroke="#9a9a9a" stroke-width="0.7" fill="none"/><circle cx="5.5" cy="3.3" r="1.5" fill="#1e1e1e"/></svg><svg class="a" style="left:200.2px;top:33.2px" width="8" height="9" viewBox="0 0 8 9"><path d="M1.8 4 V2.8 Q1.8 0.6 4 0.6 Q6.2 0.6 6.2 2.8 V4" fill="none" stroke="#3a3a3a" stroke-width="1.1"/><rect x="0.4" y="3.8" width="7.2" height="5" rx="0.6" fill="#3a3a3a"/></svg><svg class="a" style="left:213.8px;top:33.8px" width="7" height="8" viewBox="0 0 7 8"><path d="M0.6 0.8 H6.2 L3.4 7.2 Z" fill="#3a3a3a"/></svg><div class="a" style="left:0;top:45.10px;width:226px;height:13.30px;background:#ececec"></div><div class="a" style="left:230px;top:45.10px;width:355.5px;height:13.30px;background:#f4f4f4"></div><div class="a" style="left:0;top:44.30px;width:585.5px;height:0.8px;background:#dadada"></div><div class="t" style="left:26.5px;top:47.60px;font-size:9px;color:#262626">CCNodeColor</div><svg class="a" style="left:185.3px;top:48.5px" width="11" height="7" viewBox="0 0 11 7"><path d="M0.2 3.6 Q5.5 -2.4 10.8 3.6 Q5.5 8.6 0.2 3.6 Z" fill="#404040"/><path d="M1.6 4.4 Q5.5 7.6 9.4 4.4" stroke="#9a9a9a" stroke-width="0.7" fill="none"/><circle cx="5.5" cy="3.3" r="1.5" fill="#1e1e1e"/></svg><div class="a" style="left:203px;top:50px;width:2px;height:2px;background:#555"></div><svg class="a" style="left:213.8px;top:48.1px" width="7" height="8" viewBox="0 0 7 8"><path d="M0.6 0.8 H6.2 L3.4 7.2 Z" fill="#3a3a3a"/></svg><div class="a" style="left:0;top:59.30px;width:226px;height:13.30px;background:#ececec"></div><div class="a" style="left:230px;top:59.30px;width:355.5px;height:13.30px;background:#f4f4f4"></div><div class="a" style="left:0;top:58.50px;width:585.5px;height:0.8px;background:#dadada"></div><div class="t" style="left:26.5px;top:61.80px;font-size:9px;color:#262626">CCLabelTTF</div><svg class="a" style="left:185.3px;top:62.7px" width="11" height="7" viewBox="0 0 11 7"><path d="M0.2 3.6 Q5.5 -2.4 10.8 3.6 Q5.5 8.6 0.2 3.6 Z" fill="#404040"/><path d="M1.6 4.4 Q5.5 7.6 9.4 4.4" stroke="#9a9a9a" stroke-width="0.7" fill="none"/><circle cx="5.5" cy="3.3" r="1.5" fill="#1e1e1e"/></svg><div class="a" style="left:203px;top:65px;width:2px;height:2px;background:#555"></div><svg class="a" style="left:213.8px;top:62.3px" width="7" height="8" viewBox="0 0 7 8"><path d="M0.6 0.8 H6.2 L3.4 7.2 Z" fill="#3a3a3a"/></svg><div class="a" style="left:0;top:73.40px;width:226px;height:13.30px;background:#d9d9d9"></div><div class="a" style="left:230px;top:73.40px;width:355.5px;height:13.30px;background:#f4f4f4"></div><div class="a" style="left:0;top:72.60px;width:585.5px;height:0.8px;background:#dadada"></div><div class="t" style="left:26.5px;top:75.90px;font-size:9px;color:#fbfbfb">cocos2d-x</div><svg class="a" style="left:185.3px;top:76.8px" width="11" height="7" viewBox="0 0 11 7"><path d="M0.2 3.6 Q5.5 -2.4 10.8 3.6 Q5.5 8.6 0.2 3.6 Z" fill="#404040"/><path d="M1.6 4.4 Q5.5 7.6 9.4 4.4" stroke="#9a9a9a" stroke-width="0.7" fill="none"/><circle cx="5.5" cy="3.3" r="1.5" fill="#1e1e1e"/></svg><div class="a" style="left:203px;top:79px;width:2px;height:2px;background:#555"></div><svg class="a" style="left:213.8px;top:76.4px" width="7" height="8" viewBox="0 0 7 8"><path d="M0.6 0.8 H6.2 L3.4 7.2 Z" fill="#3a3a3a"/></svg><div class="a" style="left:0;top:87.60px;width:226px;height:13.30px;background:#ececec"></div><div class="a" style="left:230px;top:87.60px;width:355.5px;height:13.30px;background:#f4f4f4"></div><div class="a" style="left:0;top:86.80px;width:585.5px;height:0.8px;background:#dadada"></div><div class="t" style="left:26.5px;top:90.10px;font-size:9px;color:#262626">CCLabelTTF</div><svg class="a" style="left:185.3px;top:91.0px" width="11" height="7" viewBox="0 0 11 7"><path d="M0.2 3.6 Q5.5 -2.4 10.8 3.6 Q5.5 8.6 0.2 3.6 Z" fill="#404040"/><path d="M1.6 4.4 Q5.5 7.6 9.4 4.4" stroke="#9a9a9a" stroke-width="0.7" fill="none"/><circle cx="5.5" cy="3.3" r="1.5" fill="#1e1e1e"/></svg><div class="a" style="left:203px;top:93px;width:2px;height:2px;background:#555"></div><svg class="a" style="left:213.8px;top:90.6px" width="7" height="8" viewBox="0 0 7 8"><path d="M0.6 0.8 H6.2 L3.4 7.2 Z" fill="#3a3a3a"/></svg><div class="a" style="left:0;top:101.60px;width:226px;height:13.30px;background:#ececec"></div><div class="a" style="left:230px;top:101.60px;width:355.5px;height:13.30px;background:#f4f4f4"></div><div class="a" style="left:0;top:100.80px;width:585.5px;height:0.8px;background:#dadada"></div><div class="a" style="left:183px;top:0;width:1px;height:104px;background:#b5b5b5"></div><div class="a" style="left:226px;top:0;width:4px;height:104px;background:#c4c4c4"></div><div class="a" style="left:230px;top:0;width:1.6px;height:104px;background:#2b8ff0"></div><svg class="a" style="left:227.8px;top:0.8px" width="6" height="11" viewBox="0 0 6 11"><path d="M0 0.5 Q0 0 0.5 0 H5.5 Q6 0 6 0.5 V6.5 L3 10.7 L0 6.5 Z" fill="#1e8cf5"/></svg><div class="a" style="left:230.00px;top:1.5px;width:1px;height:11px;background:#9e9e9e"></div><div class="t" style="left:232.50px;top:3.6px;font-size:7.6px;color:#666">0</div><div class="a" style="left:246.70px;top:9.6px;width:1px;height:2.8px;background:#9a9a9a"></div><div class="a" style="left:263.40px;top:9.6px;width:1px;height:2.8px;background:#9a9a9a"></div><div class="a" style="left:280.10px;top:9.6px;width:1px;height:2.8px;background:#9a9a9a"></div><div class="a" style="left:296.80px;top:9.6px;width:1px;height:2.8px;background:#9a9a9a"></div><div class="a" style="left:313.50px;top:9.6px;width:1px;height:2.8px;background:#9a9a9a"></div><div class="a" style="left:330.20px;top:1.5px;width:1px;height:11px;background:#9e9e9e"></div><div class="t" style="left:332.70px;top:3.6px;font-size:7.6px;color:#666">1</div><div class="a" style="left:346.90px;top:9.6px;width:1px;height:2.8px;background:#9a9a9a"></div><div class="a" style="left:363.60px;top:9.6px;width:1px;height:2.8px;background:#9a9a9a"></div><div class="a" style="left:380.30px;top:9.6px;width:1px;height:2.8px;background:#9a9a9a"></div><div class="a" style="left:397.00px;top:9.6px;width:1px;height:2.8px;background:#9a9a9a"></div><div class="a" style="left:413.70px;top:9.6px;width:1px;height:2.8px;background:#9a9a9a"></div><div class="a" style="left:430.40px;top:1.5px;width:1px;height:11px;background:#9e9e9e"></div><div class="t" style="left:432.90px;top:3.6px;font-size:7.6px;color:#666">2</div><div class="a" style="left:447.10px;top:9.6px;width:1px;height:2.8px;background:#9a9a9a"></div><div class="a" style="left:463.80px;top:9.6px;width:1px;height:2.8px;background:#9a9a9a"></div><div class="a" style="left:480.50px;top:9.6px;width:1px;height:2.8px;background:#9a9a9a"></div><div class="a" style="left:497.20px;top:9.6px;width:1px;height:2.8px;background:#9a9a9a"></div><div class="a" style="left:513.90px;top:9.6px;width:1px;height:2.8px;background:#9a9a9a"></div><div class="a" style="left:530.60px;top:1.5px;width:1px;height:11px;background:#9e9e9e"></div><div class="t" style="left:533.10px;top:3.6px;font-size:7.6px;color:#666">3</div><div class="a" style="left:547.30px;top:9.6px;width:1px;height:2.8px;background:#9a9a9a"></div><div class="a" style="left:564.00px;top:9.6px;width:1px;height:2.8px;background:#9a9a9a"></div><div class="a" style="left:580.70px;top:9.6px;width:1px;height:2.8px;background:#9a9a9a"></div><div class="a" style="left:585.5px;top:13.6px;width:8.5px;height:90.4px;background:#f9f9f9;border-left:1px solid #d6d6d6"></div><div class="a" style="left:588.4px;top:21.3px;width:4.2px;height:55.7px;background:#c2c2c2;border-radius:2.1px"></div><div class="a" style="left:0;top:103.6px;width:594px;height:1px;background:#afafaf"></div><div class="a" style="left:0;top:104.6px;width:594px;height:13px;background:#f6f6f6"></div><div class="a" style="left:226.2px;top:104.6px;width:1px;height:13px;background:#d0d0d0"></div><svg class="a" style="left:2.4px;top:107px" width="7" height="8" viewBox="0 0 7 8"><path d="M0.3 0.5 L4.2 4 L0.3 7.5 Z" fill="#333"/><rect x="5" y="0.5" width="1.6" height="7" fill="#333"/></svg><div class="t" style="left:13.2px;top:106.6px;font-size:9.1px;color:#262626">No chained timeline</div><svg class="a" style="left:206.6px;top:106.8px" width="14" height="9" viewBox="0 0 14 9"><path d="M0.5 3.6 L2.5 1.2 L4.5 3.6 Z M0.5 5.4 L2.5 7.8 L4.5 5.4 Z" fill="#444"/><rect x="6.5" y="1.2" width="7" height="1.1" fill="#444"/><rect x="6.5" y="3.9" width="7" height="1.1" fill="#444"/><rect x="6.5" y="6.6" width="7" height="1.1" fill="#444"/></svg><div class="a" style="left:229.5px;top:108px;width:125.5px;height:6.2px;background:#c4c4c4;border-radius:3.1px"></div></div>
</body></html>
